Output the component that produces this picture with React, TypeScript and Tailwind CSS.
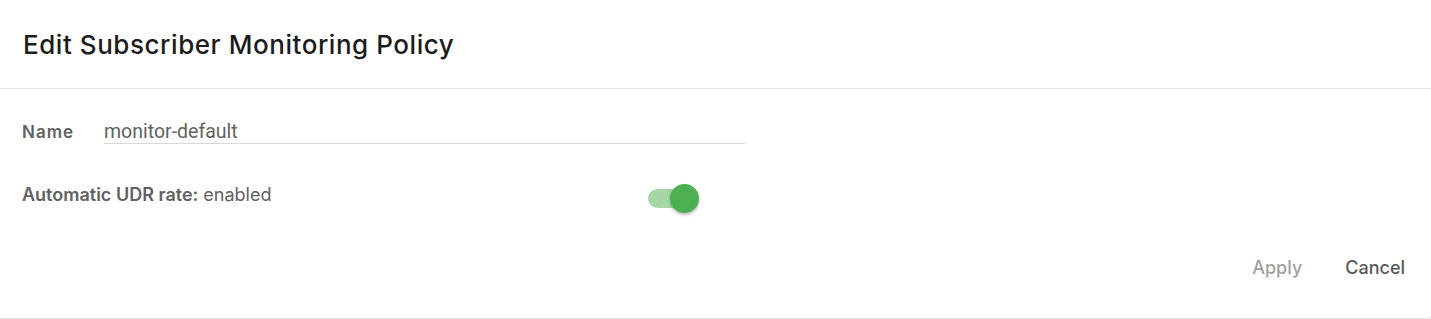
import { useState } from 'react';

export default function App() {
    const [enabled, setEnabled] = useState(true);
    const [name, setName] = useState('monitor-default');

    return (
        <div className="w-[1431px] h-[319px] bg-[#f5f5f5]">
            <div className="h-[318px] bg-white rounded-br-[4px] shadow-[0_1px_2px_rgba(0,0,0,0.12)] flex flex-col font-['Inter',sans-serif]">
                {/* Header */}
                <div className="h-[89px] border-b border-[#e6e6e6] flex items-center px-[23px]">
                    <h2 className="text-[26px] font-medium text-[#1c1c1c] tracking-[0.55px]">
                        Edit Subscriber Monitoring Policy
                    </h2>
                </div>

                {/* Body */}
                <div className="px-[22px] pt-[30px] flex flex-col">
                    <div className="flex items-end w-[723px]">
                        <label className="w-[82px] text-[17px] leading-[20px] font-semibold text-[#616161] tracking-[1px] pb-[2px]">
                            Name
                        </label>
                        <input
                            value={name}
                            onChange={e => setName(e.target.value)}
                            className="flex-1 border-b border-[#d9d9d9] outline-none text-[19.5px] text-[#616161] font-['Roboto',sans-serif] pt-[1px] leading-[20px]"
                        />
                    </div>

                    <div className="flex items-start w-[680px] mt-[38px]">
                        <span className="flex-1 text-[18px] leading-[26px] text-[#616161]">
                            <span className="font-semibold">Automatic UDR rate:</span> {enabled ? 'enabled' : 'disabled'}
                        </span>
                        <button
                            onClick={() => setEnabled(v => !v)}
                            aria-label="Automatic UDR rate"
                            className="relative w-[54px] h-[30px] mt-[1px] flex items-center cursor-pointer"
                        >
                            <span className={`absolute left-0 w-[44px] h-[19px] rounded-full transition-colors ${enabled ? 'bg-[#a5d6a7]' : 'bg-[#bdbdbd]'}`} />
                            <span
                                className={`absolute w-[29px] h-[29px] rounded-full shadow-[0_2px_3px_rgba(0,0,0,0.25)] transition-all ${enabled ? 'left-[22px] bg-[#4caf50]' : 'left-0 bg-[#fafafa]'}`}
                            />
                        </button>
                    </div>
                </div>

                {/* Actions */}
                <div className="flex justify-end items-center gap-[43px] px-[26px] mt-auto mb-[37px]">
                    <button className="text-[18px] font-medium text-[#a0a0a0] cursor-default">Apply</button>
                    <button className="text-[18px] font-medium text-[#585858] cursor-pointer">Cancel</button>
                </div>
            </div>
        </div>
    );
}
